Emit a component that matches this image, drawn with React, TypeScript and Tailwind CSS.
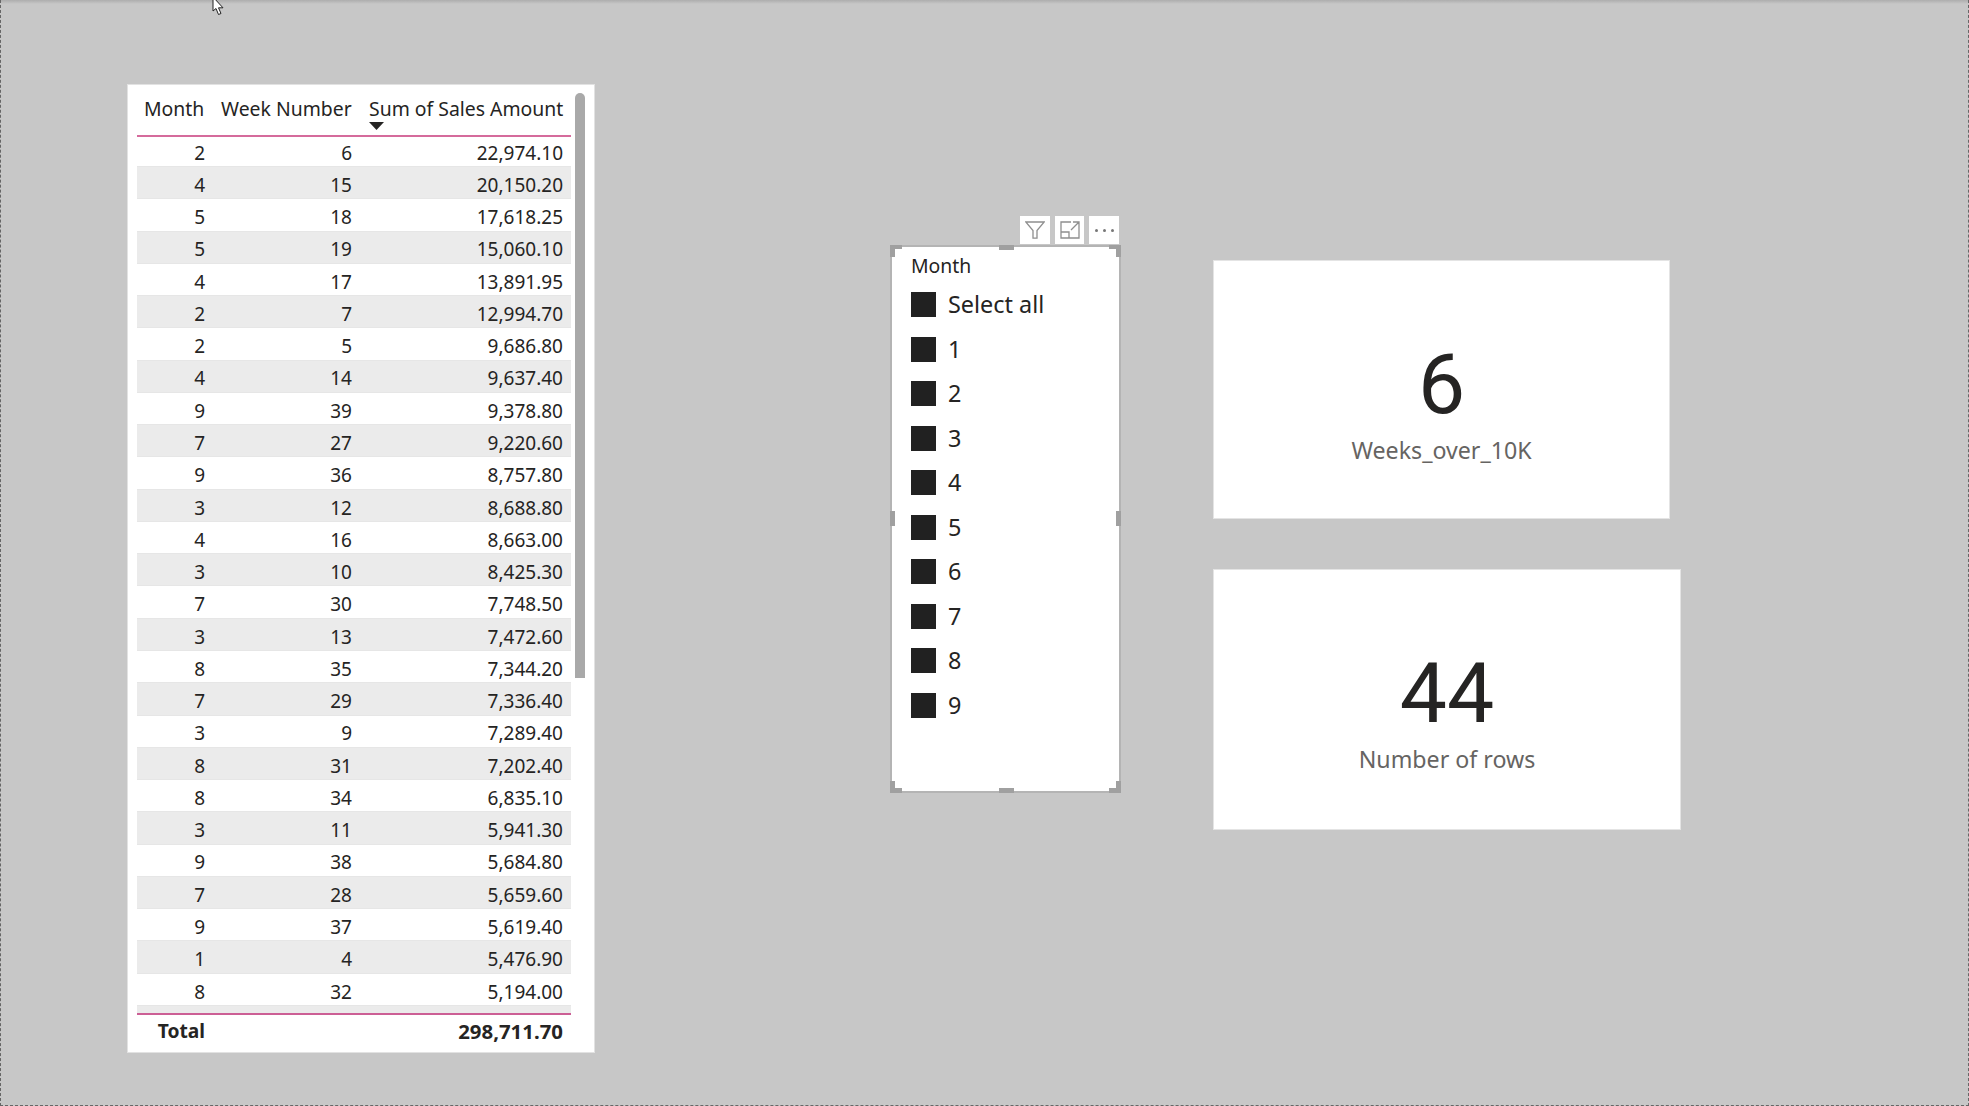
const rows = [
  [2, 6, "22,974.10"],
  [4, 15, "20,150.20"],
  [5, 18, "17,618.25"],
  [5, 19, "15,060.10"],
  [4, 17, "13,891.95"],
  [2, 7, "12,994.70"],
  [2, 5, "9,686.80"],
  [4, 14, "9,637.40"],
  [9, 39, "9,378.80"],
  [7, 27, "9,220.60"],
  [9, 36, "8,757.80"],
  [3, 12, "8,688.80"],
  [4, 16, "8,663.00"],
  [3, 10, "8,425.30"],
  [7, 30, "7,748.50"],
  [3, 13, "7,472.60"],
  [8, 35, "7,344.20"],
  [7, 29, "7,336.40"],
  [3, 9, "7,289.40"],
  [8, 31, "7,202.40"],
  [8, 34, "6,835.10"],
  [3, 11, "5,941.30"],
  [9, 38, "5,684.80"],
  [7, 28, "5,659.60"],
  [9, 37, "5,619.40"],
  [1, 4, "5,476.90"],
  [8, 32, "5,194.00"],
];

const months = ["Select all", "1", "2", "3", "4", "5", "6", "7", "8", "9"];

function SalesTable() {
  return (
    <div className="relative w-[468px] h-[969px] bg-white border border-[#e2e2e2] shrink-0 pl-[9px] pt-[1px]">
      <div className="w-[434px] text-[19px] text-[#252423]">
        <div className="flex h-[49px] text-[19.4px]">
          <div className="w-[76px] pl-[7px] pt-[8px]">Month</div>
          <div className="w-[147px] pl-[8px] pt-[8px]">Week Number</div>
          <div className="relative flex-1 pl-[9px] pt-[8px]">
            Sum of Sales Amount
            <svg className="absolute left-[9px] top-[36px]" width="15" height="8" viewBox="0 0 15 8">
              <path d="M0 0H15L7.5 8Z" fill="#252423" />
            </svg>
          </div>
        </div>
        <div className="h-[2px] bg-[#d56b9c]" />
        {rows.map((r, i) => (
          <div
            key={i}
            className={`flex items-center border-b border-[#e6e6e6] ${i === 0 ? "h-[30px] pt-[2.5px]" : "h-[32.28px] pt-[5px]"} ${i % 2 === 1 ? "bg-[#ebebeb]" : "bg-white"}`}
          >
            <div className="w-[76px] pr-[8px] text-right">{r[0]}</div>
            <div className="w-[147px] pr-[8px] text-right">{r[1]}</div>
            <div className="flex-1 pr-[8px] text-right">{r[2]}</div>
          </div>
        ))}
        <div className="h-[7px] bg-[#ebebeb]" />
        <div className="h-[2px] bg-[#cc5f95]" />
        <div className="flex h-[33px] items-center font-bold">
          <div className="w-[76px] pr-[8px] text-right text-[19.2px]">Total</div>
          <div className="w-[147px]" />
          <div className="flex-1 pr-[8px] text-right text-[20.4px]">298,711.70</div>
        </div>
      </div>
      <div className="absolute left-[447px] top-[8px] w-[10px] h-[585px] rounded-t-[5px] bg-[#a9a9a9]" />
    </div>
  );
}

function Handle({ className }: { className: string }) {
  return <div className={`absolute bg-[#a0a0a0] ${className}`} />;
}

function MonthSlicer() {
  return (
    <div className="ml-[295px] mt-[132px] w-[231px] shrink-0">
      <div className="flex justify-end gap-[5px] pr-[2px] h-[28px] mb-[1px]">
        <div className="w-[30px] bg-white flex items-center justify-center">
          <svg width="20" height="20" viewBox="0 0 20 20" fill="none" stroke="#8f8f8f" strokeWidth="1.3">
            <path d="M0.8 2H19.2L12 10.5V18.2H8V10.5Z" />
          </svg>
        </div>
        <div className="w-[29px] bg-white flex items-center justify-center">
          <svg width="20" height="18" viewBox="0 0 20 18" fill="none" stroke="#8f8f8f" strokeWidth="1.3">
            <path d="M11 1H1V17H19V7M1 11H9V17M13 1H19V7M19 1L11 9" />
          </svg>
        </div>
        <div className="w-[30px] bg-white flex items-center justify-center gap-[5px]">
          <div className="w-[3px] h-[3px] rounded-full bg-[#777]" />
          <div className="w-[3px] h-[3px] rounded-full bg-[#777]" />
          <div className="w-[3px] h-[3px] rounded-full bg-[#777]" />
        </div>
      </div>
      <div className="relative h-[548px] bg-white border-2 border-[#b4b4b4] pl-[19px] pt-[4px] text-[#252423]">
        <div className="text-[19.4px] leading-[30px]">Month</div>
        <div className="flex flex-col gap-[19.5px] mt-[11px]">
          {months.map((m) => (
            <div key={m} className="flex items-center h-[25px] gap-[12px] text-[23.4px]">
              <div className="w-[25px] h-[25px] bg-[#212121] shrink-0" />
              <span className="leading-[25px]">{m}</span>
            </div>
          ))}
        </div>
        <Handle className="-left-[2px] -top-[2px] w-[12px] h-[4px]" />
        <Handle className="-left-[2px] -top-[2px] w-[5px] h-[12px]" />
        <Handle className="-right-[2px] -top-[2px] w-[12px] h-[4px]" />
        <Handle className="-right-[2px] -top-[2px] w-[5px] h-[12px]" />
        <Handle className="left-[107px] -top-[2px] w-[15px] h-[5px]" />
        <Handle className="left-[107px] -bottom-[2px] w-[15px] h-[5px]" />
        <Handle className="-left-[2px] top-[264px] w-[5px] h-[15px]" />
        <Handle className="-right-[2px] top-[264px] w-[5px] h-[15px]" />
        <Handle className="-left-[2px] -bottom-[2px] w-[12px] h-[5px]" />
        <Handle className="-left-[2px] -bottom-[2px] w-[5px] h-[12px]" />
        <Handle className="-right-[2px] -bottom-[2px] w-[12px] h-[5px]" />
        <Handle className="-right-[2px] -bottom-[2px] w-[5px] h-[12px]" />
      </div>
    </div>
  );
}

function KpiCard({ value, label, className }: { value: string; label: string; className: string }) {
  return (
    <div className={`bg-white border border-[#e4e4e4] flex flex-col items-center ${className}`}>
      <div className="font-['Roboto',sans-serif] font-normal text-[84px] leading-[100px] mt-[74px] text-[#252423]">{value}</div>
      <div className="text-[23.2px] leading-[32px] -mt-[1px] text-[#666462]">{label}</div>
    </div>
  );
}

export default function App() {
  return (
    <div className="relative w-[1969px] h-[1106px] overflow-hidden bg-[#c7c7c7] border-x border-b border-dashed border-[#666] flex items-start pl-[126px] pt-[84px] font-['Noto_Sans',sans-serif]">
      <div className="absolute left-0 right-0 top-0 h-[4px] bg-gradient-to-b from-[#adadad] to-[#c7c7c7]" />
      <svg className="absolute left-[211px] top-0" width="13" height="16" viewBox="0 0 13 16">
        <path d="M1 -3V11L4 8.5L6.5 14.5L9 13.5L6.5 7.8H11Z" fill="#fff" stroke="#222" strokeWidth="1" />
      </svg>
      <SalesTable />
      <MonthSlicer />
      <div className="ml-[92px] mt-[176px] flex flex-col gap-[50px] items-start">
        <KpiCard value="6" label="Weeks_over_10K" className="w-[457px] h-[259px]" />
        <KpiCard value="44" label="Number of rows" className="w-[468px] h-[261px]" />
      </div>
    </div>
  );
}
